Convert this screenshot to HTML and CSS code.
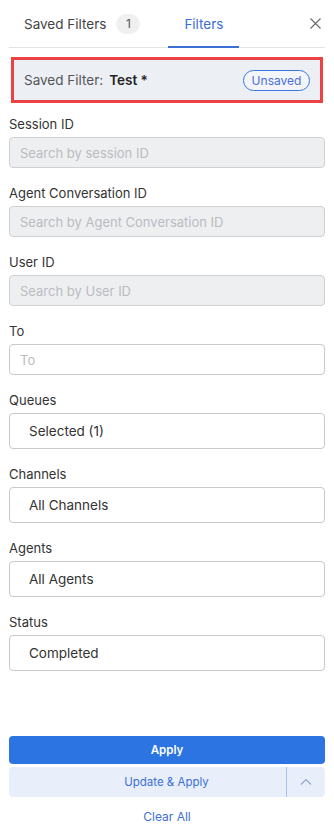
FILE: index.html
```html
<!DOCTYPE html>
<html lang="en">
<head>
<meta charset="utf-8">
<title>Filters</title>
<link rel="stylesheet" href="styles.css">
</head>
<body>
<div class="panel">
  <div class="tabs">
    <div class="tab tab-saved">
      <span>Saved Filters</span>
      <span class="badge">1</span>
    </div>
    <div class="tab tab-active">Filters</div>
    <button class="close" aria-label="Close">
      <svg width="11" height="11" viewBox="0 0 11 11"><path d="M0.5 0.5 L10.5 10.5 M10.5 0.5 L0.5 10.5" stroke="#6b6b6b" stroke-width="1.2" fill="none"/></svg>
    </button>
  </div>

  <div class="saved-box">
    <span class="saved-label">Saved Filter:</span>
    <span class="saved-name">Test *</span>
    <span class="pill">Unsaved</span>
  </div>

  <div class="fields">
    <div class="field">
      <div class="label">Session ID</div>
      <div class="input input-disabled">Search by session ID</div>
    </div>
    <div class="field">
      <div class="label">Agent Conversation ID</div>
      <div class="input input-disabled">Search by Agent Conversation ID</div>
    </div>
    <div class="field">
      <div class="label">User ID</div>
      <div class="input input-disabled">Search by User ID</div>
    </div>
    <div class="field">
      <div class="label">To</div>
      <div class="input input-empty">To</div>
    </div>
    <div class="field">
      <div class="label">Queues</div>
      <div class="select">Selected (1)</div>
    </div>
    <div class="field">
      <div class="label">Channels</div>
      <div class="select">All Channels</div>
    </div>
    <div class="field">
      <div class="label">Agents</div>
      <div class="select">All Agents</div>
    </div>
    <div class="field">
      <div class="label">Status</div>
      <div class="select">Completed</div>
    </div>
  </div>

  <div class="footer">
    <button class="btn-apply">Apply</button>
    <div class="split">
      <button class="split-main">Update &amp; Apply</button>
      <button class="split-toggle" aria-label="More">
        <svg width="12" height="8" viewBox="0 0 12 8"><path d="M1 6.5 L6 1.5 L11 6.5" stroke="#8fa6c8" stroke-width="1.2" fill="none"/></svg>
      </button>
    </div>
    <div class="clear">Clear All</div>
  </div>
</div>
</body>
</html>
```

FILE: styles.css
```css
* { box-sizing: border-box; }
html, body { margin: 0; padding: 0; background: #ffffff; }
body {
  font-family: Inter, "Noto Sans", "Liberation Sans", sans-serif;
  font-size: 13px;
  color: #333;
}
.panel {
  padding: 0 9px;
  width: 334px;
}
.tabs {
  display: flex;
  align-items: stretch;
  height: 48px;
  border-bottom: 1px solid #e3e3e3;
}
.tab {
  display: flex;
  align-items: center;
  font-size: 13.5px;
  color: #444;
}
.tab-saved {
  padding: 0 15px;
  gap: 10px;
}
.badge {
  display: inline-flex;
  align-items: center;
  justify-content: center;
  width: 24px;
  height: 20px;
  border-radius: 10px;
  background: #f0f0f0;
  color: #555;
  font-size: 12px;
}
.tab-active {
  margin-left: 13px;
  padding: 0 16px;
  color: #3a6fd3;
  border-bottom: 2px solid #3a6fd3;
  margin-bottom: -1px;
  padding-top: 1px;
}
.close {
  margin-left: auto;
  margin-right: 4px;
  border: 0;
  background: none;
  padding: 0;
  display: flex;
  align-items: center;
}
.saved-box {
  margin: 9px 2px 0;
  height: 46px;
  border: 3px solid #ee4242;
  background: #eceff4;
  display: flex;
  align-items: center;
  padding: 0 10px;
}
.saved-label { color: #555; font-size: 13.5px; }
.saved-name { color: #222; font-weight: 600; font-size: 13.5px; margin-left: 6px; }
.pill {
  margin-left: auto;
  height: 21px;
  width: 67px;
  display: flex;
  align-items: center;
  justify-content: center;
  border: 1px solid #3a76e0;
  border-radius: 11px;
  color: #4a6fd6;
  font-size: 12px;
  background: #f3f5fb;
}
.fields {
  display: flex;
  flex-direction: column;
  gap: 15px;
  margin-top: 11px;
}
.label {
  height: 20px;
  line-height: 20px;
  margin-bottom: 3px;
  color: #333;
  font-size: 13px;
}
.input {
  height: 31px;
  border-radius: 4px;
  display: flex;
  align-items: center;
  padding: 0 10px;
  font-size: 13px;
  color: #b9bcc1;
}
.input-disabled {
  background: #eeeff1;
  border: 1px solid #cfd1d4;
}
.input-empty {
  background: #fff;
  border: 1px solid #c8c9cc;
}
.select {
  height: 36px;
  border: 1px solid #c8c9cc;
  border-radius: 4px;
  display: flex;
  align-items: center;
  padding: 0 19px;
  font-size: 13.5px;
  color: #333;
}
.footer {
  margin-top: 65px;
  display: flex;
  flex-direction: column;
}
button { font-family: inherit; cursor: pointer; }
.btn-apply {
  height: 28px;
  border: 0;
  border-radius: 4px;
  background: #2c74e1;
  color: #fff;
  font-weight: 600;
  font-size: 11.5px;
}
.split {
  margin-top: 3px;
  height: 30px;
  display: flex;
  background: #e8effb;
  border-radius: 4px;
}
.split-main {
  flex: 1;
  border: 0;
  background: none;
  color: #3d70d4;
  font-size: 11.5px;
  padding: 0 0 0 38px;
  border-right: 1px solid #a8c3ee;
}
.split-toggle {
  width: 38px;
  border: 0;
  background: none;
  display: flex;
  align-items: center;
  justify-content: center;
  padding: 0;
}
.clear {
  height: 38px;
  display: flex;
  align-items: center;
  justify-content: center;
  color: #3d70d4;
  font-size: 12px;
}
```
